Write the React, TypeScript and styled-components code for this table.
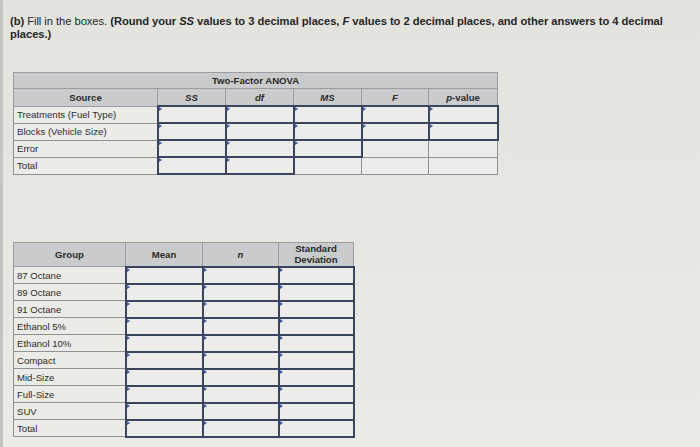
import React from "react";
import styled, { createGlobalStyle, css } from "styled-components";

const GlobalStyle = createGlobalStyle`
  html, body { margin: 0; padding: 0; }
  body {
    background: #e6e6e1;
    font-family: "Liberation Sans", Arial, sans-serif;
    color: #2b2b2b;
  }
`;

const Page = styled.div`
  width: 700px;
  height: 447px;
  box-sizing: border-box;
  border-left: 3px solid #c4c4bf;
  background: linear-gradient(180deg, #e3e3de 0%, #e8e8e3 60%, #ebebe6 100%);
  padding: 15px 0 0 7px;
  overflow: hidden;
`;

const Prompt = styled.div`
  display: flex;
  flex-direction: column;
  font-size: 11.2px;
  line-height: 13px;
  letter-spacing: -0.05px;
  color: #262626;
`;

const PromptLine = styled.div`
  white-space: nowrap;
`;

const Strong = styled.b`
  font-weight: bold;
`;

const Tables = styled.div`
  display: flex;
  flex-direction: column;
  gap: 67px;
  margin: 31px 0 0 3px;
`;

const Grid = styled.table<{ $width: number }>`
  border-collapse: collapse;
  table-layout: fixed;
  width: ${(p) => p.$width}px;
  font-size: 9.6px;
  color: #2c2c2c;
`;

const HeadCell = styled.th<{ $h?: number }>`
  background: #c9cbcc;
  border: 1px solid #9a9c9f;
  font-weight: bold;
  text-align: center;
  padding: 0 2px;
  height: ${(p) => p.$h ?? 16}px;
  line-height: 11px;
  color: #2a2a2a;
`;

const Ital = styled.i`
  font-style: italic;
`;

const LabelCell = styled.td<{ $h?: number }>`
  background: #ebebe8;
  border: 1px solid #8f9195;
  padding: 0 3px;
  height: ${(p) => p.$h ?? 15}px;
  text-align: left;
  white-space: nowrap;
`;

const Cell = styled.td<{ $input?: boolean; $h?: number }>`
  position: relative;
  background: #ececea;
  height: ${(p) => p.$h ?? 15}px;
  padding: 0;
  border: 1px solid #8f9195;
  ${(p) =>
    p.$input &&
    css`
      border: 2px solid #3b4560;
      &::before {
        content: "";
        position: absolute;
        left: 0;
        top: 0;
        width: 0;
        height: 0;
        border-top: 2px solid transparent;
        border-bottom: 2px solid transparent;
        border-left: 3px solid #3d5ea8;
      }
    `}
`;

const anovaRows: { label: string; inputs: boolean[] }[] = [
  { label: "Treatments (Fuel Type)", inputs: [true, true, true, true, true] },
  { label: "Blocks (Vehicle Size)", inputs: [true, true, true, true, true] },
  { label: "Error", inputs: [true, true, true, false, false] },
  { label: "Total", inputs: [true, true, false, false, false] },
];

const groups = [
  "87 Octane",
  "89 Octane",
  "91 Octane",
  "Ethanol 5%",
  "Ethanol 10%",
  "Compact",
  "Mid-Size",
  "Full-Size",
  "SUV",
  "Total",
];

export default function App() {
  return (
    <>
      <GlobalStyle />
      <Page>
        <Prompt>
          <PromptLine>
            <Strong>(b)</Strong> Fill in the boxes.{" "}
            <Strong>
              (Round your <Ital>SS</Ital> values to 3 decimal places, <Ital>F</Ital> values to 2
              decimal places, and other answers to 4 decimal
            </Strong>
          </PromptLine>
          <PromptLine>
            <Strong>places.)</Strong>
          </PromptLine>
        </Prompt>
        <Tables>
          <Grid $width={484}>
            <colgroup>
              <col style={{ width: 144 }} />
              <col style={{ width: 68 }} />
              <col style={{ width: 68 }} />
              <col style={{ width: 68 }} />
              <col style={{ width: 67 }} />
              <col style={{ width: 69 }} />
            </colgroup>
            <thead>
              <tr>
                <HeadCell colSpan={6} $h={15}>
                  Two-Factor ANOVA
                </HeadCell>
              </tr>
              <tr>
                <HeadCell $h={16}>Source</HeadCell>
                <HeadCell>
                  <Ital>SS</Ital>
                </HeadCell>
                <HeadCell>
                  <Ital>df</Ital>
                </HeadCell>
                <HeadCell>
                  <Ital>MS</Ital>
                </HeadCell>
                <HeadCell>
                  <Ital>F</Ital>
                </HeadCell>
                <HeadCell>
                  <Ital>p</Ital>-value
                </HeadCell>
              </tr>
            </thead>
            <tbody>
              {anovaRows.map((r) => (
                <tr key={r.label}>
                  <LabelCell>{r.label}</LabelCell>
                  {r.inputs.map((inp, i) => (
                    <Cell key={i} $input={inp} />
                  ))}
                </tr>
              ))}
            </tbody>
          </Grid>

          <Grid $width={340}>
            <colgroup>
              <col style={{ width: 112 }} />
              <col style={{ width: 77 }} />
              <col style={{ width: 76 }} />
              <col style={{ width: 75 }} />
            </colgroup>
            <thead>
              <tr>
                <HeadCell $h={23}>Group</HeadCell>
                <HeadCell>Mean</HeadCell>
                <HeadCell>
                  <Ital>n</Ital>
                </HeadCell>
                <HeadCell>
                  Standard
                  <br />
                  Deviation
                </HeadCell>
              </tr>
            </thead>
            <tbody>
              {groups.map((g) => (
                <tr key={g}>
                  <LabelCell>{g}</LabelCell>
                  <Cell $input />
                  <Cell $input />
                  <Cell $input />
                </tr>
              ))}
            </tbody>
          </Grid>
        </Tables>
      </Page>
    </>
  );
}
